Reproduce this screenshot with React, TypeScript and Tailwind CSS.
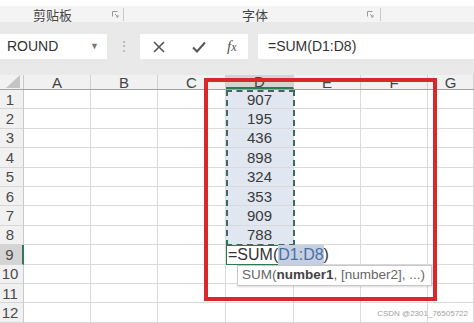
import React from "react";

const cols = [
  { name: "A", w: "w-[67px]" },
  { name: "B", w: "w-[67px]" },
  { name: "C", w: "w-[68px]" },
  { name: "D", w: "w-[68px]" },
  { name: "E", w: "w-[67px]" },
  { name: "F", w: "w-[67px]" },
  { name: "G", w: "flex-1" },
];

const values = ["907", "195", "436", "898", "324", "353", "909", "788"];

function Launcher() {
  return (
    <svg width="7" height="7" viewBox="0 0 7 7" className="text-[#9a9a9a]">
      <path d="M0.5 0.5h5M0.5 0.5v5M3 3l3 3M6 4v2H4" stroke="currentColor" strokeWidth="1" fill="none" />
    </svg>
  );
}

function Row({ n }: { n: number }) {
  const sel = n >= 1 && n <= 8;
  const active = n === 9;
  return (
    <div className="flex h-[19.4px]">
      <div
        className={
          "w-[24px] shrink-0 flex items-center justify-center pr-[3px] text-[15px] leading-none text-[#4a4a4a] border-b border-[#d6d6d6] " +
          (active ? "bg-[#d4d4d4] border-r-2 border-r-[#2f7a4f]" : "bg-[#f1f1f1] border-r border-r-[#c9c9c9]")
        }
      >
        {n}
      </div>
      {cols.map((c) => (
        <div
          key={c.name}
          className={
            c.w +
            " shrink-0 border-r border-b border-[#dadada] flex items-center justify-center text-[15px] leading-none text-[#3a3a3a] " +
            (c.name === "D" && sel ? "bg-[#e0e7f1]" : "bg-white")
          }
        >
          {c.name === "D" && sel ? values[n - 1] : null}
        </div>
      ))}
    </div>
  );
}

export default function App() {
  return (
    <div className="relative w-[474px] h-[323px] overflow-hidden bg-white font-['Liberation_Sans','Noto_Sans_CJK_SC',sans-serif]">
      <div className="h-[6px] bg-white" />
      {/* ribbon group labels */}
      <div className="h-[16px] bg-[#f4f4f4] flex items-center text-[13px] text-[#444] font-['Noto_Sans_CJK_SC',sans-serif]">
        <div className="w-[112px] pl-[33px] leading-none">剪贴板</div>
        <div className="w-[11px] flex items-center"><Launcher /></div>
        <div className="w-px h-[13px] bg-[#c8c8c8]" />
        <div className="w-[256px] flex items-center">
          <span className="ml-[118px] leading-none">字体</span>
          <span className="ml-auto mr-[6px] flex"><Launcher /></span>
        </div>
        <div className="w-px h-[13px] bg-[#c8c8c8]" />
      </div>
      {/* formula bar */}
      <div className="h-[53px] bg-[#e9e9e9] pt-[12px]">
        <div className="flex h-[25px] items-stretch">
          <div className="w-[107px] bg-white flex items-center pl-[7px] pr-[8px] text-[14px] text-[#333]">
            <span>ROUND</span>
            <span className="ml-auto text-[9px] text-[#777]">▼</span>
          </div>
          <div className="w-[33px] flex items-center justify-center text-[#b0b0b0] text-[14px]">⋮</div>
          <div className="w-[108px] bg-white flex items-center text-[#555]">
            <svg width="12" height="12" viewBox="0 0 12 12" className="ml-[13px]">
              <path d="M1 1l10 10M11 1L1 11" stroke="#555" strokeWidth="1.6" fill="none" />
            </svg>
            <svg width="14" height="12" viewBox="0 0 14 12" className="ml-[27px]">
              <path d="M1 6.5l4 4L13 1.5" stroke="#555" strokeWidth="2" fill="none" />
            </svg>
            <span className="ml-[21px] font-['Liberation_Serif',serif] italic text-[15px] leading-none">
              f<span className="text-[12px]">x</span>
            </span>
          </div>
          <div className="w-[10px]" />
          <div className="flex-1 bg-white flex items-center pl-[10px] text-[14px] text-[#333]">=SUM(D1:D8)</div>
        </div>
      </div>
      {/* column header */}
      <div className="flex h-[15px] border-b border-[#a3a3a3]">
        <div className="w-[24px] shrink-0 bg-[#f1f1f1] border-r border-[#c9c9c9] relative">
          <svg width="14" height="13" viewBox="0 0 14 13" className="absolute right-[3px] bottom-[1px]">
            <path d="M14 0V13H0Z" fill="#c4c4c4" />
          </svg>
        </div>
        {cols.map((c) => (
          <div
            key={c.name}
            className={
              c.w +
              " shrink-0 border-r border-[#d0d0d0] flex items-center justify-center text-[15px] leading-none text-[#444] " +
              (c.name === "D" ? "bg-[#d3d3d3] border-b-2 border-b-[#2f7a4f]" : "bg-[#f1f1f1]")
            }
          >
            {c.name}
          </div>
        ))}
      </div>
      {/* rows */}
      <div>
        {Array.from({ length: 12 }, (_, i) => (
          <Row key={i} n={i + 1} />
        ))}
      </div>

      {/* marching ants selection D1:D8 */}
      <div className="absolute left-[226px] top-[90px] w-[69px] h-[156px] border-2 border-dashed border-[#3c6a62]" />
      {/* active cell D9 editing */}
      <div className="absolute left-[226px] top-[245px] w-[69px] h-[20px] border border-[#2f7a4f]" />
      <div className="absolute left-[228px] top-[245px] h-[20px] flex items-center text-[16px] leading-none text-[#333] whitespace-nowrap">
        =SUM(<span className="bg-[#c6d0e1] text-[#4a6fa8] py-[2px]">D1:D8</span>)
      </div>
      {/* tooltip */}
      <div className="absolute left-[237px] top-[265px] w-[195px] h-[21px] bg-white border border-[#c8c8c8] shadow-[1px_1px_2px_rgba(0,0,0,0.15)] flex items-center pl-[4px] text-[13.5px] text-[#666] whitespace-nowrap">
        SUM(<b className="text-[#444]">number1</b>, [number2], ...)
      </div>
      {/* red annotation box */}
      <div className="absolute left-[204px] top-[78px] w-[233px] h-[223px] border-4 border-[#d9282b]" />
      {/* watermark */}
      <div className="absolute right-[6px] top-[310px] text-[8px] text-[#a0a0a0] whitespace-nowrap leading-none">
        CSDN @2301_76505722
      </div>
    </div>
  );
}
